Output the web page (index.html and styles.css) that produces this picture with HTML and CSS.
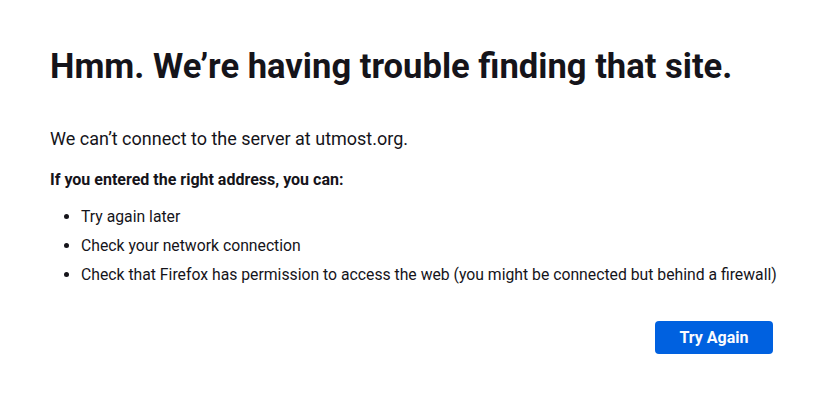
FILE: index.html
```html
<!DOCTYPE html>
<html lang="en">
<head>
<meta charset="utf-8">
<link rel="stylesheet" href="styles.css">
</head>
<body>
<main class="container">
  <h1 class="title">Hmm. We’re having trouble finding that site.</h1>
  <p class="intro">We can’t connect to the server at utmost.org.</p>
  <p class="lead">If you entered the right address, you can:</p>
  <ul class="tips">
    <li>Try again later</li>
    <li>Check your network connection</li>
    <li>Check that Firefox has permission to access the web (you might be connected but behind a firewall)</li>
  </ul>
  <div class="actions">
    <button class="primary">Try Again</button>
  </div>
</main>
</body>
</html>
```
FILE: styles.css
```css
html, body {
  margin: 0;
  background: #ffffff;
  color: #15141a;
  font-family: Roboto, "Liberation Sans", sans-serif;
}
.container {
  width: 723px;
  margin-left: 50px;
  padding-top: 42px;
}
.title {
  margin: 0;
  font-size: 34.6px;
  font-weight: 700;
  line-height: 48px;
}
.intro {
  margin: 36px 0 0;
  font-size: 18px;
  line-height: 26px;
}
.lead {
  margin: 17px 0 0;
  font-size: 16px;
  font-weight: 700;
  line-height: 22px;
}
.tips {
  margin: 15px 0 0;
  padding-left: 31px;
  font-size: 15.75px;
  line-height: 22px;
  white-space: nowrap;
}
.tips li {
  margin-bottom: 7px;
}
.actions {
  display: flex;
  justify-content: flex-end;
  margin-top: 35px;
}
.primary {
  width: 118px;
  height: 33px;
  border: none;
  border-radius: 4px;
  background: #0061e0;
  color: #fbfbfe;
  font-family: Roboto, "Liberation Sans", sans-serif;
  font-size: 16px;
  font-weight: 700;
}
```
